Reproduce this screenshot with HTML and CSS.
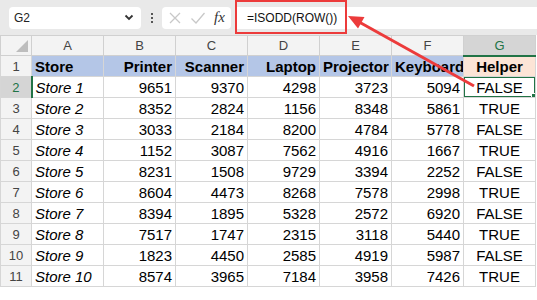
FILE: index.html
```html
<!DOCTYPE html>
<html lang="en">
<head>
<meta charset="UTF-8">
<title>ISODD Helper</title>
<link rel="stylesheet" href="styles.css">
</head>
<body>
<div class="toolbar">
    <div class="namebox">
        <span>G2</span>
        <svg class="chev" width="10" height="7" viewBox="0 0 10 7"><path d="M1.5 1.5 L5 5 L8.5 1.5" fill="none" stroke="#333" stroke-width="1.8"/></svg>
    </div>
    <div class="dots"><i></i><i></i><i></i></div>
    <div class="fxbox">
        <svg width="14" height="14" viewBox="0 0 14 14"><path d="M2 2 L12 12 M12 2 L2 12" stroke="#c8c8c8" stroke-width="1.3"/></svg>
        <svg width="16" height="14" viewBox="0 0 16 14"><path d="M1.5 7.5 L6 12 L14.5 2" fill="none" stroke="#c8c8c8" stroke-width="1.3"/></svg>
        <span class="fx">fx</span>
    </div>
    <div class="formula">=ISODD(ROW())</div>
</div>

<table class="sheet">
    <tr class="colhead">
        <th class="corner"><span class="tri"></span></th>
        <th>A</th><th>B</th><th>C</th><th>D</th><th>E</th><th>F</th><th class="sel">G</th>
    </tr>
    <tr>
        <th class="rh">1</th>
        <td class="hd left">Store</td><td class="hd">Printer</td><td class="hd">Scanner</td><td class="hd">Laptop</td><td class="hd">Projector</td><td class="hd">Keyboard</td><td class="hd helper">Helper</td>
    </tr>
    <tr>
        <th class="rh sel">2</th>
        <td class="store">Store 1</td><td>9651</td><td>9370</td><td>4298</td><td>3723</td><td>5094</td><td class="bool active">FALSE</td>
    </tr>
    <tr>
        <th class="rh">3</th>
        <td class="store">Store 2</td><td>8352</td><td>2824</td><td>1156</td><td>8348</td><td>5861</td><td class="bool">TRUE</td>
    </tr>
    <tr>
        <th class="rh">4</th>
        <td class="store">Store 3</td><td>3033</td><td>2184</td><td>8200</td><td>4784</td><td>5778</td><td class="bool">FALSE</td>
    </tr>
    <tr>
        <th class="rh">5</th>
        <td class="store">Store 4</td><td>1152</td><td>3087</td><td>7562</td><td>4916</td><td>1667</td><td class="bool">TRUE</td>
    </tr>
    <tr>
        <th class="rh">6</th>
        <td class="store">Store 5</td><td>8231</td><td>1508</td><td>9729</td><td>3394</td><td>2252</td><td class="bool">FALSE</td>
    </tr>
    <tr>
        <th class="rh">7</th>
        <td class="store">Store 6</td><td>8604</td><td>4473</td><td>8268</td><td>7578</td><td>2998</td><td class="bool">TRUE</td>
    </tr>
    <tr>
        <th class="rh">8</th>
        <td class="store">Store 7</td><td>8394</td><td>1895</td><td>5328</td><td>2572</td><td>6920</td><td class="bool">FALSE</td>
    </tr>
    <tr>
        <th class="rh">9</th>
        <td class="store">Store 8</td><td>7517</td><td>1747</td><td>2315</td><td>3118</td><td>5440</td><td class="bool">TRUE</td>
    </tr>
    <tr>
        <th class="rh">10</th>
        <td class="store">Store 9</td><td>1823</td><td>4450</td><td>2585</td><td>4919</td><td>5987</td><td class="bool">FALSE</td>
    </tr>
    <tr>
        <th class="rh">11</th>
        <td class="store">Store 10</td><td>8574</td><td>3965</td><td>7184</td><td>3958</td><td>7426</td><td class="bool">TRUE</td>
    </tr>
</table>

<!-- callout: red box round the formula and arrow from G2 -->
<div class="callout"></div>
<svg class="arrow" width="537" height="300" viewBox="0 0 537 300">
    <line x1="474" y1="86" x2="360" y2="22.5" stroke="#ec3b3b" stroke-width="3"/>
    <polygon points="348,16 364.5,17 358,28.5" fill="#ec3b3b"/>
</svg>
</body>
</html>
```

FILE: styles.css
```css
body {
    margin: 0;
    width: 537px;
    height: 300px;
    overflow: hidden;
    position: relative;
    background: #fff;
    font-family: "Liberation Sans", Arial, sans-serif;
    color: #000;
}
.toolbar {
    display: flex;
    align-items: center;
    height: 35px;
    padding-left: 9px;
    background: #e9e9e9;
    box-sizing: border-box;
}
.namebox {
    display: flex;
    align-items: center;
    justify-content: space-between;
    width: 132px;
    height: 22px;
    padding: 0 7px 0 5px;
    box-sizing: border-box;
    background: #fff;
    border-radius: 4px;
    font-size: 12px;
    color: #222;
}
.dots {
    display: flex;
    flex-direction: column;
    gap: 2px;
    margin: 0 9px 0 10px;
}
.dots i {
    width: 2px;
    height: 2px;
    background: #555;
}
.fxbox {
    display: flex;
    align-items: center;
    gap: 8px;
    width: 69px;
    height: 22px;
    padding-left: 6px;
    box-sizing: border-box;
    background: #fff;
    border-radius: 4px;
}
.fx {
    font-family: "Liberation Serif", serif;
    font-style: italic;
    font-size: 15px;
    color: #333;
}
.formula {
    flex: 1;
    height: 22px;
    line-height: 22px;
    margin-left: 5px;
    padding-left: 11px;
    background: #fff;
    font-size: 12px;
    color: #111;
}
.sheet {
    border-collapse: collapse;
    table-layout: fixed;
    width: 535px;
    font-size: 15px;
}
.sheet th, .sheet td {
    width: 72px;
    height: 21px;
    padding: 0 3px;
    border: 1px solid #d6d6d6;
    white-space: nowrap;
    overflow: hidden;
    box-sizing: border-box;
}
.sheet td {
    text-align: right;
    vertical-align: bottom;
    padding-bottom: 1px;
}
.colhead th {
    height: 20px;
    background: #f3f3f3;
    border-color: #d0d0d0;
    font-weight: normal;
    font-size: 13px;
    color: #444;
}
.colhead th.sel {
    background: #d5d5d5;
    color: #217346;
    border-bottom: 2px solid #217346;
}
.sheet th.corner {
    width: 31px;
    position: relative;
}
.tri {
    position: absolute;
    right: 3px;
    bottom: 3px;
    border-style: solid;
    border-width: 0 0 12px 12px;
    border-color: transparent transparent #bdbdbd transparent;
}
.sheet .rh {
    background: #f3f3f3;
    font-weight: normal;
    font-size: 13px;
    color: #444;
    text-align: center;
}
.sheet .rh.sel {
    background: #d5d5d5;
    color: #217346;
    border-right: 2px solid #217346;
}
.sheet .hd {
    background: #b4c6e7;
    font-weight: bold;
}
.sheet .left, .sheet .store {
    text-align: left;
}
.sheet .store {
    font-style: italic;
}
.sheet .hd.helper {
    background: #fce4d6;
    text-align: center;
}
.sheet .bool {
    text-align: center;
}
.active {
    position: relative;
}
.active::after {
    content: "";
    position: absolute;
    left: -1px;
    top: -1px;
    right: -1px;
    bottom: -1px;
    border: 2px solid #217346;
}
.active::before {
    content: "";
    position: absolute;
    right: -3px;
    bottom: -3px;
    width: 5px;
    height: 5px;
    background: #217346;
    border: 1px solid #fff;
    z-index: 1;
}
.callout {
    position: absolute;
    left: 235px;
    top: 0;
    width: 112px;
    height: 34px;
    border: 2.5px solid #ec3b3b;
    box-sizing: border-box;
}
.arrow {
    position: absolute;
    left: 0;
    top: 0;
}
```
